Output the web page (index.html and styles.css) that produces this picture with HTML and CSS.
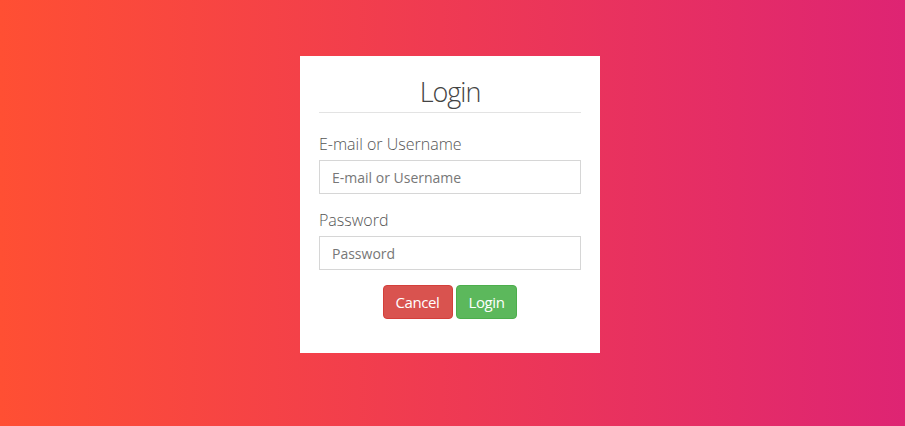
FILE: index.html
```html
<!DOCTYPE html>
<html>
<head>
<meta charset="utf-8">
<link rel="stylesheet" href="styles.css">
</head>
<body>
<div class="card">
  <h2 class="title">Login</h2>
  <hr class="rule">
  <div class="group">
    <label class="label">E-mail or Username</label>
    <input class="field" type="text" placeholder="E-mail or Username">
  </div>
  <div class="group">
    <label class="label">Password</label>
    <input class="field" type="password" placeholder="Password">
  </div>
  <div class="actions">
    <button class="btn btn-cancel">Cancel</button>
    <button class="btn btn-login">Login</button>
  </div>
</div>
</body>
</html>
```
FILE: styles.css
```css
html, body {
  margin: 0;
  height: 100%;
}
body {
  background: linear-gradient(to right, #ff4f33, #de2473);
  font-family: "Open Sans", sans-serif;
  padding-top: 56px;
  box-sizing: border-box;
}
.card {
  width: 300px;
  box-sizing: border-box;
  margin-left: 300px;
  background: #fff;
  padding: 20px 19px 34px;
}
.title {
  margin: 0;
  font-size: 27px;
  font-weight: 300;
  line-height: 32px;
  letter-spacing: -1px;
  text-align: center;
  color: #444;
}
.rule {
  margin: 4px 0 20px;
  border: 0;
  border-top: 1px solid #e3e3e3;
}
.group {
  margin-bottom: 15px;
}
.label {
  display: block;
  font-size: 16px;
  font-weight: 300;
  line-height: 22px;
  color: #555;
  margin-bottom: 5px;
}
.field {
  display: block;
  width: 100%;
  box-sizing: border-box;
  height: 34px;
  padding: 6px 12px;
  border: 1px solid #d6d6d6;
  border-radius: 0;
  font-family: "Open Sans", sans-serif;
  font-size: 14px;
  color: #555;
  outline: none;
}
.field::placeholder {
  color: #777;
}
.actions {
  display: flex;
  justify-content: center;
  gap: 3px;
}
.btn {
  font-family: "Open Sans", sans-serif;
  font-size: 15px;
  letter-spacing: -0.4px;
  line-height: 20px;
  padding: 6px 12px;
  border-radius: 4px;
  color: #fff;
  border: 1px solid transparent;
  cursor: pointer;
}
.btn-cancel {
  background: #d9534f;
  border-color: #d43f3a;
}
.btn-login {
  background: #5cb85c;
  border-color: #4cae4c;
}
```
